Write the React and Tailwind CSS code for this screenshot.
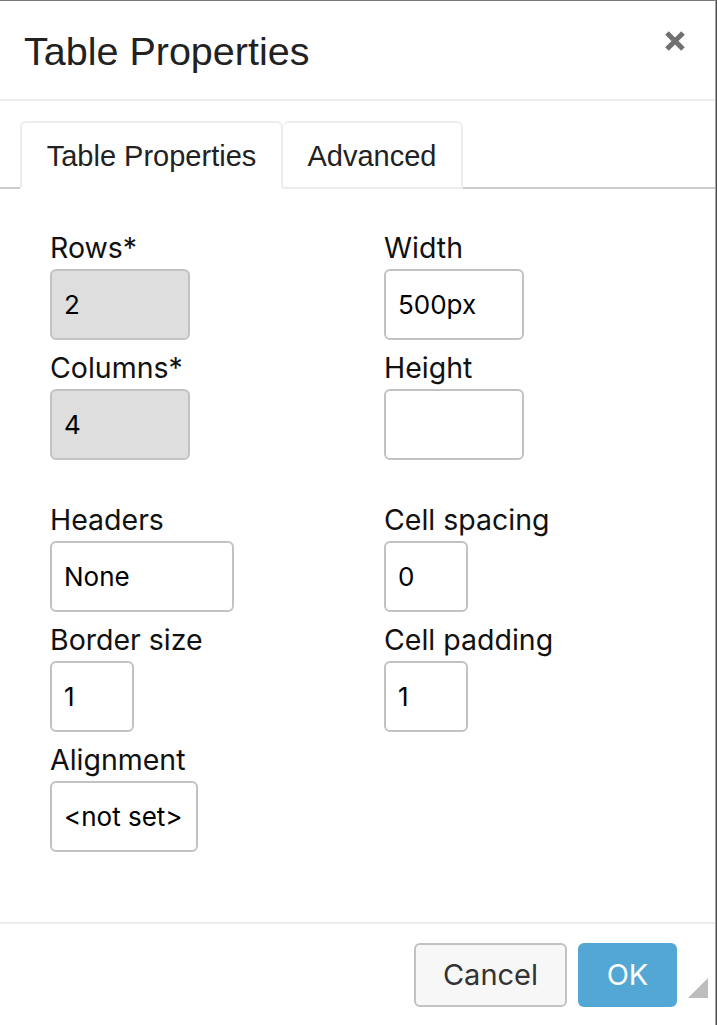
import React from "react";

const labelFont = { fontFamily: "Inter, 'Noto Sans', sans-serif" };

function Field({ label, value, width, readOnly }) {
  return (
    <div className="flex flex-col">
      <div className="h-[49px] flex items-end pb-[5px]">
        <span className="text-[28.5px] leading-[32px] text-[#111]" style={labelFont}>{label}</span>
      </div>
      <div
        className={`h-[71px] ${width} rounded-[6px] border-2 border-[#c2c2c2] flex items-center px-[12px] text-[26px] text-black ${readOnly ? "bg-[#dedede]" : "bg-white"}`}
        style={labelFont}
      >
        {value}
      </div>
    </div>
  );
}

export default function App() {
  return (
    <div className="h-[1025px] w-[717px] bg-[#4a4a4a] overflow-hidden">
      <div className="relative w-[716px] h-[1025px] bg-white border-t border-[#777] border-r border-r-[#a8a8a8] flex flex-col">
        {/* Header */}
        <div className="h-[100px] shrink-0 border-b-2 border-[#ececec] flex items-start justify-between pl-[24px] pr-[29px]">
          <h1
            className="mt-[31px] text-[39.5px] leading-none text-[#222]"
            style={{ fontFamily: "'Liberation Sans', Arial, sans-serif" }}
          >
            Table Properties
          </h1>
          <svg width="22" height="22" viewBox="0 0 22 22" className="mt-[29px]">
            <path d="M3 3 L19 19 M19 3 L3 19" stroke="#707070" strokeWidth="5" strokeLinecap="butt" />
          </svg>
        </div>

        {/* Tabs */}
        <div className="pt-[20px] shrink-0 border-b-2 border-[#cccccc] flex" style={{ fontFamily: "'Liberation Sans', Arial, sans-serif" }}>
          <div className="ml-[20px] w-[263px] h-[68px] -mb-[2px] pt-[3px] border-2 border-[#ececec] border-b-white rounded-t-[6px] bg-white flex items-center justify-center text-[29px] text-[#222]">
            Table Properties
          </div>
          <div className="w-[180px] h-[68px] -mb-[2px] pt-[3px] border-2 border-l-0 border-[#ececec] rounded-t-[6px] bg-white flex items-center justify-center text-[29px] text-[#222]">
            Advanced
          </div>
        </div>

        {/* Body */}
        <div className="flex-1 pt-[31px] pl-[50px] grid grid-cols-[334px_1fr] content-start">
          <div className="flex flex-col">
            <Field label="Rows*" value="2" width="w-[140px]" readOnly />
            <Field label="Columns*" value="4" width="w-[140px]" readOnly />
            <div className="h-[32px]" />
            <Field label="Headers" value="None" width="w-[184px]" />
            <Field label="Border size" value="1" width="w-[84px]" />
            <Field label="Alignment" value="<not set>" width="w-[148px]" />
          </div>
          <div className="flex flex-col">
            <Field label="Width" value="500px" width="w-[140px]" />
            <Field label="Height" value="" width="w-[140px]" />
            <div className="h-[32px]" />
            <Field label="Cell spacing" value="0" width="w-[84px]" />
            <Field label="Cell padding" value="1" width="w-[84px]" />
          </div>
        </div>

        {/* Footer */}
        <div className="shrink-0 h-[103px] border-t-2 border-[#ececec] flex justify-end items-start pt-[19px] pr-[38px] gap-[11px]" style={labelFont}>
          <button className="w-[153px] h-[64px] rounded-[6px] border-2 border-[#c2c2c2] bg-[#f7f7f7] text-[29px] text-[#333]">
            Cancel
          </button>
          <button className="w-[99px] h-[64px] rounded-[6px] bg-[#53a7d5] text-[29px] text-white">
            OK
          </button>
        </div>

        {/* resize grip */}
        <svg width="20" height="20" viewBox="0 0 20 20" className="absolute right-[7px] bottom-[27px]">
          <polygon points="20,0 20,20 0,20" fill="#bdbdbd" />
        </svg>
      </div>
    </div>
  );
}
